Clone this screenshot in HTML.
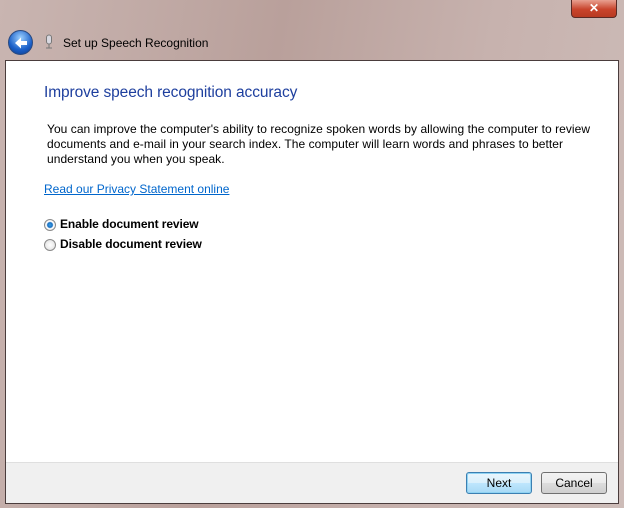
<!DOCTYPE html>
<html><head><style>
*{margin:0;padding:0;box-sizing:border-box}
body{width:624px;height:508px;overflow:hidden;font-family:"Liberation Sans",sans-serif;background:linear-gradient(100deg,#c9b5b1 0%,#b9a09b 40%,#c7b2ae 70%,#cdbcb8 100%);position:relative}
.abs{position:absolute}
.win{left:5px;top:60px;width:614px;height:444px;border:1px solid #4a3c3c;background:#fff}
.foot{left:6px;top:462px;width:612px;height:41px;background:#f0f0f0;border-top:1px solid #dfdfdf}
.t{font-size:12px;color:#000;white-space:nowrap}
.btn{height:22px;border:1px solid #707070;border-radius:3px;background:linear-gradient(#f2f2f2,#ebebeb 50%,#dddddd 51%,#cfcfcf);font-size:12px;text-align:center;line-height:21px;color:#000}
.radio{width:12px;height:12px;border-radius:50%;border:1px solid #8a8a8a;background:radial-gradient(#fff,#ddd)}
</style></head><body>
<div class="abs" style="left:571px;top:0;width:46px;height:18px;border:1px solid #5a2a25;border-top:none;border-radius:0 0 4px 4px;background:linear-gradient(#e8a090,#c8442c 55%,#b83a22);color:#fff;font-weight:bold;font-size:12px;text-align:center;line-height:16px">✕</div>
<div class="abs" style="left:8px;top:30px;width:25px;height:25px;border-radius:50%;background:radial-gradient(circle at 50% 30%,#9cd0ff,#1a5fc8 60%,#0b3a8a);border:1px solid #2a4a80"></div>
<svg class="abs" style="left:8px;top:30px" width="26" height="26"><path d="M7 13 L13 7.5 L13 11 L19 11 L19 15 L13 15 L13 18.5 Z" fill="#fff"/></svg>
<svg class="abs" style="left:44px;top:34px" width="10" height="16"><rect x="2.5" y="1" width="5" height="9" rx="2.5" fill="#d8d8e0" stroke="#777"/><path d="M5 10v4M2 14h6" stroke="#777"/></svg>
<div class="abs t" style="left:63px;top:36px">Set up Speech Recognition</div>
<div class="abs win"></div>
<div class="abs foot"></div>
<div class="abs" style="left:44px;top:84px;font-size:15.5px;letter-spacing:-0.1px;color:#1e3f9e;white-space:nowrap">Improve speech recognition accuracy</div>
<div class="abs t" style="left:47px;top:122px;line-height:15px;letter-spacing:0.05px">You can improve the computer's ability to recognize spoken words by allowing the computer to review<br>documents and e-mail in your search index. The computer will learn words and phrases to better<br>understand you when you speak.</div>
<div class="abs t" style="left:44px;top:182px;color:#0066cc;text-decoration:underline">Read our Privacy Statement online</div>
<div class="abs radio" style="left:44px;top:219px;background:radial-gradient(#3aa0e8 0,#1a6fc0 2.5px,#fff 3.5px,#ddd)"></div>
<div class="abs t" style="left:60px;top:217px;font-weight:bold;letter-spacing:-0.1px">Enable document review</div>
<div class="abs radio" style="left:44px;top:239px"></div>
<div class="abs t" style="left:60px;top:237px;font-weight:bold;letter-spacing:-0.1px">Disable document review</div>
<div class="abs btn" style="left:466px;top:472px;width:66px;border-color:#3c7fb1;box-shadow:inset 0 0 0 1px #8fd3f3;background:linear-gradient(#eaf6fd,#d9f0fc 50%,#bee6fd 51%,#a7d9f5)">Next</div>
<div class="abs btn" style="left:541px;top:472px;width:66px">Cancel</div>
</body></html>
